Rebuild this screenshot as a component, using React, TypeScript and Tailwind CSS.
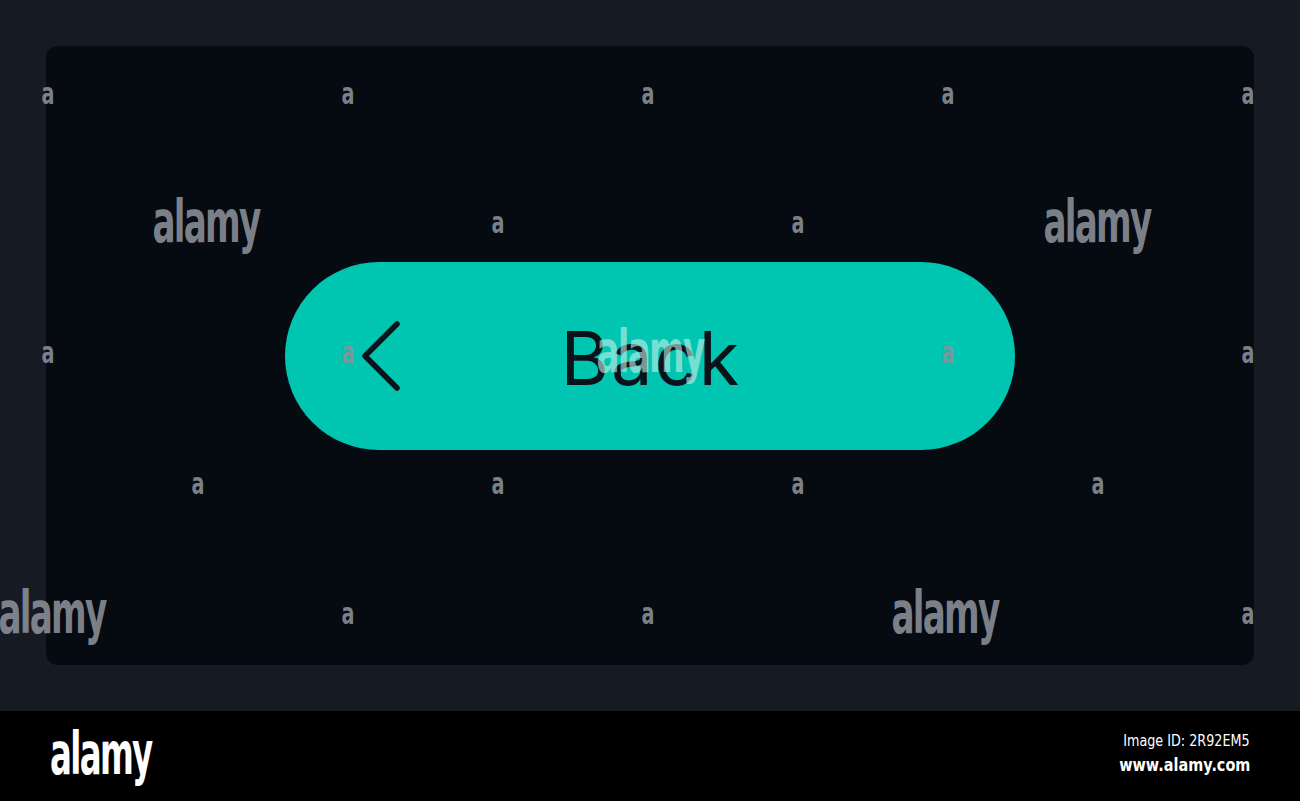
// small stamp marks laid over the canvas
const marks = [
    { x: 48, y: 93 }, { x: 348, y: 93 }, { x: 648, y: 93 }, { x: 948, y: 93 }, { x: 1248, y: 93 },
    { x: 498, y: 222 }, { x: 798, y: 222 },
    { x: 48, y: 352 }, { x: 348, y: 352 }, { x: 948, y: 352 }, { x: 1248, y: 352 },
    { x: 198, y: 483 }, { x: 498, y: 483 }, { x: 798, y: 483 }, { x: 1098, y: 483 },
    { x: 348, y: 613 }, { x: 648, y: 613 }, { x: 1248, y: 613 },
];

const words = [
    { x: 206, y: 222 }, { x: 1097, y: 222 },
    { x: 52, y: 613 }, { x: 945, y: 613 },
];

export default function App() {
    return (
        <div className="relative w-[1300px] h-[801px] overflow-hidden bg-black font-['Inter',sans-serif]">
            <div className="h-[711px] bg-[#161b23] p-[46px]">
                {/* Panel */}
                <div className="h-[619px] rounded-xl bg-[#060b12] flex items-center justify-center pt-[1px]">
                    <button className="relative w-[730px] h-[188px] rounded-full bg-[#00c5b0] flex items-center justify-center text-[#0b121a]">
                        <svg
                            className="absolute left-[76px] top-[58px]"
                            width="40"
                            height="72"
                            viewBox="0 0 40 72"
                            fill="none"
                            stroke="currentColor"
                            strokeWidth="5.5"
                            strokeLinecap="round"
                            strokeLinejoin="round"
                        >
                            <path d="M36 4 4 36l32 32" />
                        </svg>
                        <span className="text-[74px] leading-none tracking-[2px] pl-[2px] mt-[4px]">Back</span>
                    </button>
                </div>
            </div>

            {/* Footer strip */}
            <div className="h-[90px] flex items-center justify-between pl-[50px] pr-[50px] text-white">
                <span className="font-['DejaVu_Sans',sans-serif] font-bold text-[58px] leading-none tracking-[-3px] scale-x-[0.56] origin-left -mt-[4px]">alamy</span>
                <div className="flex flex-col items-end gap-[8px] font-['DejaVu_Sans',sans-serif] -mt-[4px]">
                    <span className="text-[15px] leading-none scale-x-[0.85] origin-right">Image ID: 2R92EM5</span>
                    <span className="text-[17px] font-bold leading-none scale-x-[0.85] origin-right">www.alamy.com</span>
                </div>
            </div>

            {/* Stamp overlay */}
            {marks.map((m, i) => (
                <span
                    key={i}
                    className="absolute -translate-x-1/2 -translate-y-1/2 font-['DejaVu_Sans',sans-serif] font-bold text-[31px] leading-none text-[#8b9099]/90 scale-x-[0.62]"
                    style={{ left: m.x, top: m.y }}
                >
                    a
                </span>
            ))}
            {words.map((w, i) => (
                <span
                    key={i}
                    className="absolute -translate-x-1/2 -translate-y-1/2 font-['DejaVu_Sans',sans-serif] font-bold text-[58px] leading-none tracking-[-3px] text-[#8b9099]/90 scale-x-[0.59]"
                    style={{ left: w.x, top: w.y }}
                >
                    alamy
                </span>
            ))}
            <span className="absolute left-[650px] top-[352px] -translate-x-1/2 -translate-y-1/2 font-['DejaVu_Sans',sans-serif] font-bold text-[58px] leading-none tracking-[-3px] text-[#c8f0ea]/60 scale-x-[0.59]">
                alamy
            </span>
        </div>
    );
}
